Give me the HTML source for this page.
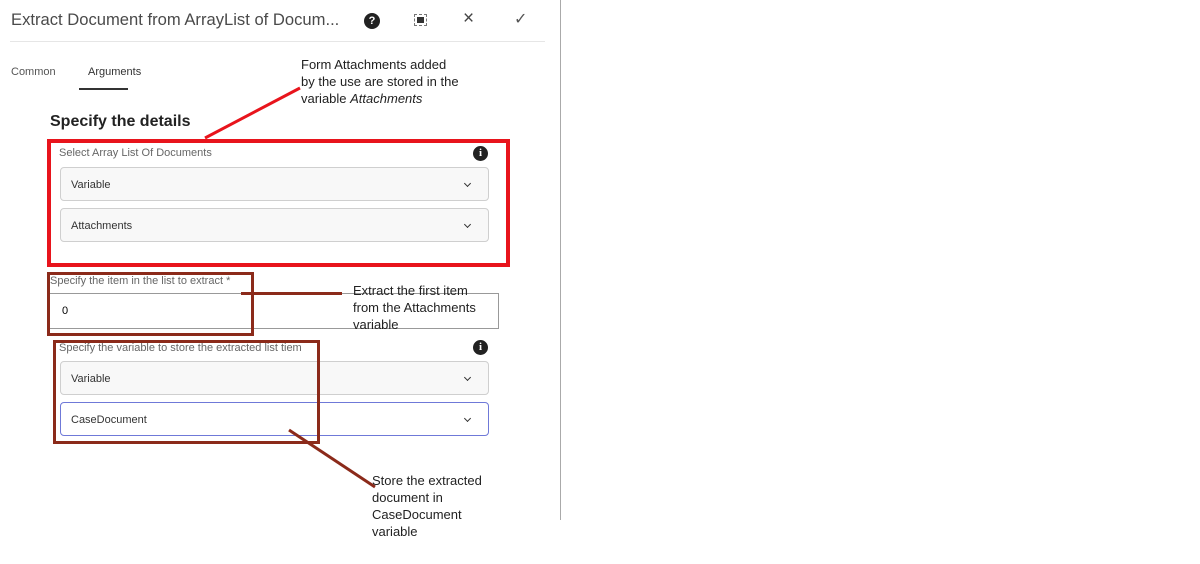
<!DOCTYPE html>
<html><head><style>
*{margin:0;padding:0;box-sizing:border-box}
body{width:1200px;height:564px;background:#fff;position:relative;overflow:hidden;font-family:"Liberation Sans",sans-serif}
.a{position:absolute;white-space:nowrap}
.dd{position:absolute;left:60px;width:429px;height:34px;background:#f8f8f8;border:1px solid #cfcfcf;border-radius:4px;font-size:11px;color:#333;padding:11px 0 0 10px}
.dd:after{content:"";position:absolute;right:18px;top:13px;width:4px;height:4px;border-right:1.5px solid #333;border-bottom:1.5px solid #333;transform:rotate(45deg)}
.lbl{font-size:11px;color:#666}
.note{font-size:13px;color:#222;line-height:17px}
.info{position:absolute;width:15px;height:15px;border-radius:50%;background:#222;color:#fff;font:bold 11px "Liberation Serif",serif;text-align:center;line-height:15px}
</style></head><body>
<div class="a" style="left:11px;top:10px;font-size:16.6px;color:#4a4a4a">Extract Document from ArrayList of Docum...</div>
<div class="info" style="left:364px;top:13px;width:16px;height:16px;line-height:16px;font-family:'Liberation Sans'">?</div>
<div class="a" style="left:414px;top:14px;width:13px;height:12px;border:1px dashed #777"></div>
<div class="a" style="left:417px;top:17px;width:7px;height:6px;background:#333"></div>
<div class="a" style="left:463px;top:8px;font-size:19px;color:#444">×</div>
<div class="a" style="left:514px;top:9px;font-size:16px;color:#555">✓</div>
<div class="a" style="left:10px;top:41px;width:535px;height:1px;background:#e6e6e6"></div>
<div class="a" style="left:560px;top:0;width:1px;height:520px;background:#aaa"></div>
<div class="a" style="left:11px;top:66px;font-size:11px;color:#555">Common</div>
<div class="a" style="left:88px;top:66px;font-size:11px;color:#333">Arguments</div>
<div class="a" style="left:79px;top:88px;width:49px;height:2px;background:#333"></div>
<div class="a note" style="left:301px;top:56px">Form Attachments added<br>by the use are stored in the<br>variable <i>Attachments</i></div>
<div class="a" style="left:50px;top:113px;font-size:16px;font-weight:bold;color:#222">Specify the details</div>
<div class="a lbl" style="left:59px;top:147px">Select Array List Of Documents</div>
<div class="info" style="left:473px;top:146px">i</div>
<div class="dd" style="top:167px">Variable</div>
<div class="dd" style="top:208px">Attachments</div>
<div class="a" style="left:47px;top:139px;width:463px;height:128px;border:4px solid #e8141c"></div>
<div class="a lbl" style="left:50px;top:275px">Specify the item in the list to extract *</div>
<div class="a" style="left:47px;top:293px;width:452px;height:36px;border:1px solid #999;background:#fff;font-size:11px;padding:11px 0 0 14px">0</div>
<div class="a" style="left:47px;top:272px;width:207px;height:64px;border:3px solid #8b2a1a"></div>
<div class="a" style="left:241px;top:292px;width:101px;height:3px;background:#8b2a1a"></div>
<div class="a note" style="left:353px;top:282px">Extract the first item<br>from the Attachments<br>variable</div>
<div class="a lbl" style="left:59px;top:342px">Specify the variable to store the extracted list tiem</div>
<div class="info" style="left:473px;top:340px">i</div>
<div class="dd" style="top:361px">Variable</div>
<div class="dd" style="top:402px;background:#fff;border-color:#6f79d8">CaseDocument</div>
<div class="a" style="left:53px;top:340px;width:267px;height:104px;border:3px solid #8b2a1a"></div>
<svg class="a" style="left:0;top:0" width="1200" height="564">
<line x1="205" y1="138" x2="300" y2="88" stroke="#e8141c" stroke-width="3"/>
<line x1="289" y1="430" x2="375" y2="487" stroke="#8b2a1a" stroke-width="3"/>
</svg>
<div class="a note" style="left:372px;top:472px">Store the extracted<br>document in<br>CaseDocument<br>variable</div>
</body></html>
